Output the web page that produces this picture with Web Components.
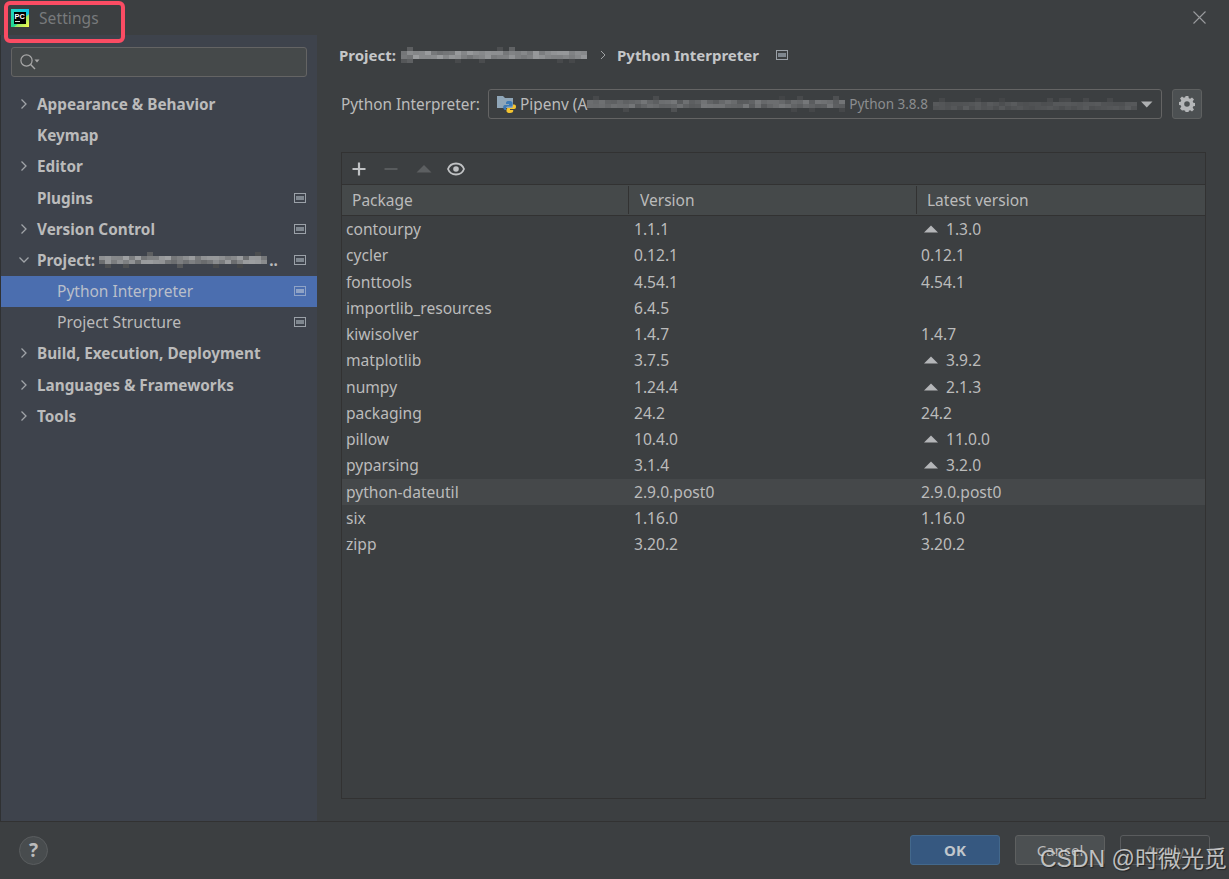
<!DOCTYPE html>
<html lang="en"><head><meta charset="utf-8"><title>Settings</title>
<style>
html,body{margin:0;padding:0;background:#3c3f41}
body{font-family:"Noto Sans","Open Sans",sans-serif;color:#bbb;width:1229px;height:879px;overflow:hidden}
</style></head><body>
<settings-dialog></settings-dialog>
<script>
const def=(name,html,init)=>customElements.define(name,class extends HTMLElement{
  connectedCallback(){ if(this.shadowRoot) return; const r=this.attachShadow({mode:'open'}); r.innerHTML=typeof html==='function'?html(this):html; init&&init(this,r);} });
const chevR='<svg width="10" height="12" viewBox="0 0 10 12"><path d="M2.5 1.5 7 6l-4.5 4.5" fill="none" stroke="#a0a4a8" stroke-width="1.3"/></svg>';
const chevD='<svg width="12" height="10" viewBox="0 0 12 10"><path d="M1.5 2.5 6 7l4.5-4.5" fill="none" stroke="#a0a4a8" stroke-width="1.3"/></svg>';
const proj=(c='#9ba1a8',f='#7f878f')=>`<svg width="12" height="10" viewBox="0 0 12 10"><rect x=".5" y=".5" width="11" height="9" fill="none" stroke="${c}"/><rect x="2" y="3" width="8" height="4" fill="${f}"/></svg>`;

def('blur-text',el=>{
  const w=+el.getAttribute('w'),h=+(el.getAttribute('h')||12),seed=+(el.getAttribute('seed')||7);
  const lo=+(el.getAttribute('lo')||80),hi=+(el.getAttribute('hi')||150);
  let s=seed,o='';const rnd=()=>(s=(s*9301+49297)%233280)/233280;
  const cw=6,ch=4;
  for(let y=0;y<h;y+=ch)for(let x=0;x<w;x+=cw){
    const mid=y>=h*.25&&y<h*.75;
    if(!mid&&rnd()<.85)continue;
    const t=rnd();
    const v=mid?Math.round(lo+(hi-lo)*t):Math.round(66+(lo-66)*t*.7);
    o+=`<rect x="${x}" y="${y}" width="${cw}" height="${ch}" fill="rgb(${v},${v+2},${v+4})"/>`;
  }
  return `<style>:host{display:inline-block;width:${w}px;height:${h}px;line-height:0}</style><svg width="${w}" height="${h}" shape-rendering="crispEdges">${o}</svg>`;
});

def('title-bar',`<style>
:host{display:flex;align-items:center;height:35px;flex:none;background:#3c3f41;padding:0 23px 0 11px;box-sizing:border-box}
.t{margin-left:10px;font-size:15.5px;color:#787a7c;letter-spacing:.1px;flex:1}
svg{display:block}</style>
<svg width="18" height="18" viewBox="0 0 18 18"><defs><linearGradient id="g" x1="0" y1="1" x2="1" y2="0"><stop offset="0" stop-color="#21d789"/><stop offset=".5" stop-color="#21d7c0"/><stop offset="1" stop-color="#07c3f2"/></linearGradient><linearGradient id="y" x1="0" y1="0" x2="1" y2="1"><stop offset="0" stop-color="#21d789"/><stop offset="1" stop-color="#fcf84a"/></linearGradient></defs><rect width="18" height="18" fill="url(#g)"/><path d="M18 5v13H3z" fill="url(#y)"/><rect x="3" y="3" width="12" height="12" fill="#000"/><text x="3.600" y="10" font-family="Liberation Sans" font-weight="700" font-size="7.4" fill="#fff">PC</text><rect x="4" y="12" width="5" height="1" fill="#ddd"/></svg>
<span class="t">Settings</span>
<svg width="13" height="13" viewBox="0 0 13 13"><path d="M.5.5l12 12M12.500.5l-12 12" stroke="#9a9c9e" stroke-width="1.1" fill="none"/></svg>`);

def('search-box',`<style>
:host{display:flex;align-items:center;height:30px;margin:12px 10px 11.4px 10px;background:#45494a;border:1px solid #646464;border-radius:3px;box-sizing:border-box;padding-left:7px}
svg{display:block}</style>
<svg width="22" height="18" viewBox="0 0 22 18"><circle cx="7.5" cy="7.5" r="5.6" fill="none" stroke="#a8a8a8" stroke-width="1.2"/><path d="M11.6 11.6 16 16" stroke="#a8a8a8" stroke-width="1.4"/><path d="M15.5 6.5h5l-2.500 3z" fill="#a8a8a8"/></svg>`);

def('nav-item',el=>{
  const c=el.getAttribute('chev'),child=el.hasAttribute('child'),sel=el.hasAttribute('selected'),p=el.hasAttribute('proj');
  const cs=el.hasAttribute('wide')?15.75:15.5;
  return `<style>
  :host{display:flex;align-items:center;height:31.2px;box-sizing:border-box;padding-left:${child?56:18}px;padding-right:11px;font-size:${child?cs:15.3}px;font-weight:${child?400:700};color:${sel?'#b9bfca':'#bbb'};background:${sel?'#4b6eaf':'transparent'};white-space:nowrap}
  .c{width:18px;flex:none;display:flex;align-items:center;${c=='d'?'margin-left:-1px;margin-right:1px;':''}}
  .l{flex:1;display:flex;align-items:center;min-width:0}
  .p{display:flex}</style>
  ${child?'':`<span class="c">${c=='r'?chevR:c=='d'?chevD:''}</span>`}
  <span class="l"><slot></slot></span>${p?`<span class="p">${sel?proj('#8fa3c6','#8fa3c6'):proj()}</span>`:''}`;
});

def('side-nav',`<style>
:host{display:block;width:316px;flex:none;margin-left:1px;background:#3e434c;}
</style><search-box></search-box><slot></slot>`);

def('inter-combo',`<style>
:host{display:flex;align-items:center;flex:none;width:674px;height:30px;border:1px solid #646464;border-radius:3px;box-sizing:border-box;padding:0 8px 0 8px;font-size:15.4px;color:#bbb;white-space:nowrap}
.v{margin-left:4px;font-size:13.500px;color:#8b8d8f}
.s{flex:1}svg{display:block;flex:none}</style>
<svg width="20" height="20" viewBox="0 0 20 20"><path d="M0 2h6l2 2h8v10H0z" fill="#8fa6b8"/><path d="M12 7c-2 0-3 .6-3 2v1h3v1H8c-1.300 0-1.800 1-1.800 2.300S7 16 8 16h1v-1.800c0-1 .8-1.700 1.800-1.700h3c1 0 1.700-.7 1.700-1.600V9c0-1.400-1.500-2-3.500-2z" fill="#3d7ab5"/><path d="M13 19c2 0 3.200-.7 3.200-2v-1h-3.200v-1h4.200c1.200 0 1.800-1 1.800-2.300s-.7-2.200-1.800-2.200h-1.200v1.700c0 1-.8 1.800-1.800 1.800h-3c-1 0-1.700.7-1.700 1.600V17c0 1.400 1.500 2 3.500 2z" fill="#f4c430"/></svg>
<span style="margin-left:3px">Pipenv (A</span><blur-text w="258" h="16" seed="11" lo="88" hi="118"></blur-text><span class="v">Python 3.8.8</span><blur-text w="204" h="12" seed="5" lo="76" hi="90" style="margin-left:5px"></blur-text><span class="s"></span>
<svg width="12" height="7" viewBox="0 0 12 7"><path d="M0 .5h11.500L5.750 6.500z" fill="#aeb0b2"/></svg>`);

def('gear-button',`<style>
:host{display:flex;align-items:center;justify-content:center;width:30px;height:30px;flex:none;background:#4c5052;border:1px solid #5e6060;border-radius:3px;box-sizing:border-box}
svg{display:block}</style>
<svg width="16" height="16" viewBox="0 0 16 16"><path fill="#b4b6b8" fill-rule="evenodd" d="M6.600 0h2.800l.4 2.200 1.400.6L13 1.500l2 2-1.300 1.800.6 1.400 2.200.4v2.800l-2.200.4-.6 1.400 1.300 1.800-2 2-1.800-1.300-1.400.6-.4 2.200H6.600l-.4-2.200-1.400-.6L3 14.500l-2-2 1.300-1.800-.6-1.400L-.5 8.900V6.100l2.200-.4.6-1.400L1 2.500l2-2 1.800 1.300 1.400-.6zM8 5.200a2.800 2.800 0 1 0 0 5.600 2.800 2.800 0 0 0 0-5.600z"/></svg>`);

def('pkg-toolbar',`<style>
:host{display:flex;align-items:center;height:32px;flex:none;box-sizing:border-box;border-bottom:1px solid #323232;padding-left:10px}
svg{display:block}.i{width:32px;flex:none;display:flex}.i.e{margin-left:-1px}</style>
<span class="i"><svg width="14" height="14" viewBox="0 0 14 14"><path d="M7 .5v13M.5 7h13" stroke="#c0c2c4" stroke-width="2.200"/></svg></span>
<span class="i"><svg width="14" height="14" viewBox="0 0 14 14"><path d="M.5 7h13" stroke="#585b5d" stroke-width="2"/></svg></span>
<span class="i"><svg width="16" height="10" viewBox="0 0 16 10"><path d="M8 1 15.500 8.500H.5z" fill="#5c5f61"/></svg></span>
<span class="i e"><svg width="18" height="14" viewBox="0 0 18 14"><path d="M9 1.500C5.300 1.500 2.200 3.700 1 7c1.200 3.300 4.300 5.500 8 5.500s6.800-2.200 8-5.500c-1.200-3.300-4.300-5.500-8-5.500z" fill="none" stroke="#c0c2c4" stroke-width="1.800"/><circle cx="9" cy="7" r="2.800" fill="#c0c2c4"/></svg></span>`);

def('pkg-header',`<style>
:host{display:grid;grid-template-columns:286px 288px 1fr;height:31px;flex:none;box-sizing:border-box;background:#45494a;border-bottom:1px solid #323232;font-size:15.5px;color:#bbb}
span{display:flex;align-items:center;padding-left:10px;position:relative}
span+span{padding-left:12px}
span+span+span{padding-left:11px}
span+span::before{content:"";position:absolute;left:0;top:1px;bottom:1px;width:1px;background:#323232}
</style><span>Package</span><span>Version</span><span>Latest version</span>`);

def('pkg-row',el=>{
  const n=el.getAttribute('name'),v=el.getAttribute('ver'),l=el.getAttribute('latest')||'',up=el.hasAttribute('up'),s=el.hasAttribute('selected');
  return `<style>
  :host{display:grid;grid-template-columns:288px 287px 1fr;height:26.250px;align-items:center;font-size:15.6px;color:#bbb;background:${s?'#45484a':'transparent'}}
  span{display:flex;align-items:center;padding-left:4px;white-space:nowrap}
  svg{display:block;margin:0 8px 0 3px;flex:none}</style>
  <span>${n}</span><span>${v}</span><span>${up?'<svg width="14" height="8" viewBox="0 0 14 8"><path d="M7 .5 14 7.500H0z" fill="#b4b6b8"/></svg>':''}${l}</span>`;
});

def('pkg-table',`<style>
:host{display:flex;flex-direction:column;width:865px;height:647px;flex:none;margin:33px 0 0 2px;box-sizing:border-box;border:1px solid #323232}
</style><pkg-toolbar></pkg-toolbar><pkg-header></pkg-header><slot></slot>`);

def('project-panel',`<style>
:host{display:block;flex:1;box-sizing:border-box;padding:0 0 0 22px;min-width:0}
.crumb{display:flex;align-items:center;height:24px;margin-top:8px;font-size:15px;font-weight:700;color:#c4c6c8;white-space:nowrap}
.sep{margin:0 11px 0 13px;display:flex}
.row{display:flex;align-items:center;margin-top:22px;font-size:15.35px;white-space:nowrap;padding-left:2px}
.lbl{width:147px;flex:none}
gear-button{margin-left:10px}
</style>
<div class="crumb"><span>Project:</span><blur-text w="186" h="16" seed="23" lo="110" hi="155" style="margin-left:5px"></blur-text>
<span class="sep"><svg width="6" height="10" viewBox="0 0 6 10"><path d="M1 1l4 4-4 4" fill="none" stroke="#a0a2a4"/></svg></span><span>Python Interpreter</span>
<span style="margin-left:17px;display:flex">${proj()}</span></div>
<div class="row"><span class="lbl">Python Interpreter:</span><inter-combo></inter-combo><gear-button></gear-button></div>
<slot></slot>`);

def('dialog-button',el=>{
  const p=el.hasAttribute('primary'),d=el.hasAttribute('disabled');
  return `<style>:host{display:flex;align-items:center;justify-content:center;width:90px;height:30px;box-sizing:border-box;border-radius:3px;font-size:15px;
  background:${p?'#365880':d?'#3c3f41':'#4c5052'};border:1px solid ${p?'#43688c':d?'#5a5c5e':'#5e6060'};color:${p?'#c0c6cc':d?'#777':'#bbb'};font-weight:${p?700:400}}</style><slot></slot>`;
});

def('dialog-footer',`<style>
:host{display:flex;align-items:center;height:58px;flex:none;box-sizing:border-box;border-top:1px solid #323232;padding:0 19px 1px 19px;gap:15px;background:#3c3f41}
.h{width:29px;height:29px;border-radius:50%;border:1px solid #5a5d5f;background:#484c4e;box-sizing:border-box;display:flex;align-items:center;justify-content:center;font:700 19px "Noto Sans",sans-serif;color:#bbb}
.s{flex:1}</style><span class="h">?</span><span class="s"></span><slot></slot>`);

def('settings-dialog',`<style>
:host{display:flex;flex-direction:column;width:1229px;height:879px;position:relative;background:#3c3f41;box-sizing:border-box;overflow:hidden}
.main{display:flex;flex:1;min-height:0}
.mark{position:absolute;left:4px;top:1px;width:121px;height:42px;box-sizing:border-box;border:4px solid #fb4c63;border-radius:6px}
.wm{position:absolute;left:1040px;top:840px;font:23px "Liberation Sans","Noto Sans CJK SC",sans-serif;color:rgba(232,232,232,.78);text-shadow:1px 1px 1px rgba(30,30,30,.8);white-space:nowrap}
.edge{position:absolute;left:0;top:35px;bottom:58px;width:1px;background:#2f3133}
</style>
<title-bar></title-bar>
<div class="main">
<side-nav>
<nav-item chev="r">Appearance &amp; Behavior</nav-item>
<nav-item chev="n">Keymap</nav-item>
<nav-item chev="r">Editor</nav-item>
<nav-item chev="n" proj>Plugins</nav-item>
<nav-item chev="r" proj>Version Control</nav-item>
<nav-item chev="d" proj>Project:<blur-text w="168" h="16" seed="31" lo="105" hi="160" style="margin-left:4px"></blur-text><span style="margin-left:2px">..</span></nav-item>
<nav-item child selected proj>Python Interpreter</nav-item>
<nav-item child proj wide>Project Structure</nav-item>
<nav-item chev="r">Build, Execution, Deployment</nav-item>
<nav-item chev="r">Languages &amp; Frameworks</nav-item>
<nav-item chev="r">Tools</nav-item>
</side-nav>
<project-panel>
<pkg-table>
<pkg-row name="contourpy" ver="1.1.1" latest="1.3.0" up></pkg-row>
<pkg-row name="cycler" ver="0.12.1" latest="0.12.1"></pkg-row>
<pkg-row name="fonttools" ver="4.54.1" latest="4.54.1"></pkg-row>
<pkg-row name="importlib_resources" ver="6.4.5"></pkg-row>
<pkg-row name="kiwisolver" ver="1.4.7" latest="1.4.7"></pkg-row>
<pkg-row name="matplotlib" ver="3.7.5" latest="3.9.2" up></pkg-row>
<pkg-row name="numpy" ver="1.24.4" latest="2.1.3" up></pkg-row>
<pkg-row name="packaging" ver="24.2" latest="24.2"></pkg-row>
<pkg-row name="pillow" ver="10.4.0" latest="11.0.0" up></pkg-row>
<pkg-row name="pyparsing" ver="3.1.4" latest="3.2.0" up></pkg-row>
<pkg-row name="python-dateutil" ver="2.9.0.post0" latest="2.9.0.post0" selected></pkg-row>
<pkg-row name="six" ver="1.16.0" latest="1.16.0"></pkg-row>
<pkg-row name="zipp" ver="3.20.2" latest="3.20.2"></pkg-row>
</pkg-table>
</project-panel>
</div>
<dialog-footer>
<dialog-button primary>OK</dialog-button>
<dialog-button>Cancel</dialog-button>
<dialog-button disabled>Apply</dialog-button>
</dialog-footer>
<div class="edge"></div>
<div class="mark"></div>
<div class="wm">CSDN @时微光觅</div>`);
</script>
</body></html>
